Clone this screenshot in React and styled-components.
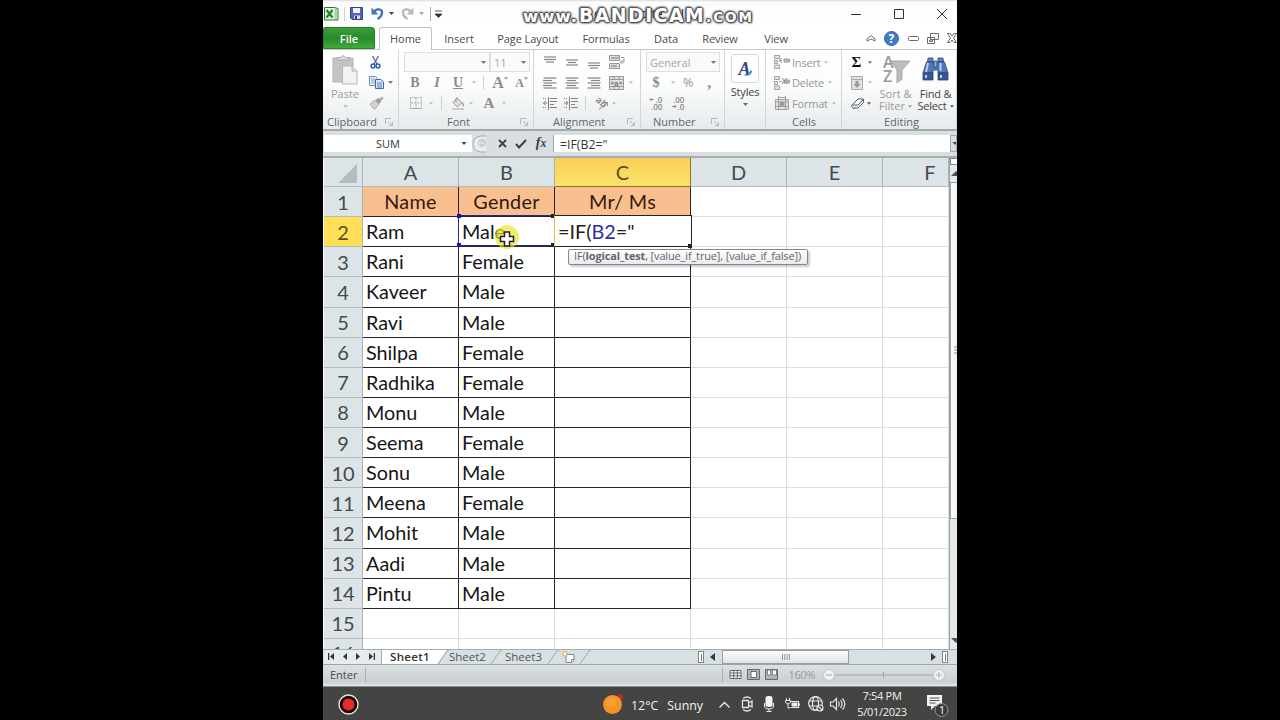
import React from "react";
import styled, { createGlobalStyle, css } from "styled-components";

const Global = createGlobalStyle`
  * { box-sizing: border-box; }
  html, body { margin: 0; background: #000; overflow: hidden; }
  body { font-family: "Open Sans", "Noto Sans", sans-serif; font-size: 11px; color: #444; }
  svg { display: block; flex: none; overflow: visible; }
`;

const Screen = styled.main`
  width: 1280px;
  height: 720px;
  background: #000;
  display: flex;
  justify-content: flex-start;
  padding-left: 323px;
`;
const Window = styled.section`
  width: 634px;
  height: 720px;
  display: flex;
  flex-direction: column;
  background: #fff;
  overflow: hidden;
  position: relative;
`;

/* ---------- title bar ---------- */
const TitleBar = styled.header`
  height: 27px;
  flex: none;
  display: flex;
  align-items: center;
  padding-left: 1px;
  background: linear-gradient(#d9dcdc 0, #fbfcfc 2px, #fff 100%);
  position: relative;
`;
const QuickAccess = styled.div`
  display: flex;
  align-items: center;
  width: 200px;
`;
const Title = styled.div`
  position: absolute;
  left: 271px;
  top: 5px;
  width: 90px;
  font-size: 12px;
  line-height: 18px;
  color: #111;
  display: flex;
  justify-content: space-between;
`;
const Watermark = styled.div`
  position: absolute;
  left: 200px;
  top: 6px;
  height: 20px;
  display: flex;
  align-items: baseline;
  font-family: "DejaVu Sans", sans-serif;
  font-weight: 700;
  color: #fff;
  white-space: nowrap;
  line-height: 20px;
  text-shadow: 1px 0 1px #555, -1px 0 1px #555, 0 1px 1px #555, 0 -1px 1px #555,
    1px 1px 2px #555, -1px -1px 2px #555, 0 0 3px #555, 0 0 3px #666;
`;
const MarkSide = styled.span`
  font-size: ${(p) => p.$size}px;
  width: ${(p) => p.$w}px;
  letter-spacing: ${(p) => p.$ls || 0}px;
`;
const WindowButtons = styled.div`
  margin-left: auto;
  display: flex;
  align-items: center;
  gap: 33px;
  padding-right: 10px;
`;

/* ---------- ribbon ---------- */
const TabRow = styled.nav`
  height: 23px;
  flex: none;
  display: flex;
  background: #fff;
  border-bottom: 1px solid #c3c8cd;
`;
const FileTab = styled.div`
  width: 52px;
  height: 22px;
  background: linear-gradient(#3d9c3c, #278a29 50%, #3eac3a);
  border: 1px solid #2a7f2c;
  border-radius: 2px 3px 0 0;
  color: #fff;
  font-weight: 600;
  text-align: center;
  line-height: 21px;
`;
const Tab = styled.div`
  width: ${(p) => p.$w}px;
  margin-left: ${(p) => p.$ml || 0}px;
  height: 23px;
  text-align: center;
  line-height: 23px;
  letter-spacing: ${(p) => p.$ls || 0}px;
  color: #4b4b4b;
  white-space: nowrap;
  ${(p) =>
    p.$active &&
    css`
      border: 1px solid #bcc2c8;
      border-bottom: 0;
      border-radius: 3px 3px 0 0;
      background: #fff;
      line-height: 21px;
    `}
`;
const TabTools = styled.div`
  margin-left: auto;
  display: flex;
  align-items: center;
  width: 91px;
  gap: 8.3px;
  flex: none;
`;
const Ribbon = styled.div`
  height: 81px;
  flex: none;
  display: flex;
  background: linear-gradient(#fff 0, #fbfcfc 45%, #e6eaec 100%);
  border-bottom: 2px solid #a2a8ab;
`;
const Group = styled.div`
  width: ${(p) => p.$w}px;
  flex: none;
  border-right: 1px solid #d2d6d9;
  display: flex;
  flex-direction: column;
  justify-content: space-between;
  padding-top: 2px;
`;
const GroupBody = styled.div`
  flex: 1;
  display: flex;
  min-height: 0;
`;
const GroupLabel = styled.div`
  height: 14px;
  display: flex;
  justify-content: space-between;
  align-items: center;
  padding: 0 5px 0 ${(p) => p.$pl}px;
  color: #5f656b;
  line-height: 14px;
`;
const ToolRows = styled.div`
  display: flex;
  flex-direction: column;
  padding-left: ${(p) => p.$pl || 0}px;
  color: #979797;
`;
const ToolRow = styled.div`
  height: 20.5px;
  display: flex;
  align-items: center;
  gap: ${(p) => p.$gap || 0}px;
  padding-left: ${(p) => p.$pl || 0}px;
  letter-spacing: ${(p) => p.$ls || 0}px;
  white-space: nowrap;
`;
const BigTool = styled.div`
  width: ${(p) => p.$w}px;
  padding-top: ${(p) => p.$pt || 3}px;
  display: flex;
  flex-direction: column;
  align-items: center;
  line-height: 12px;
  color: ${(p) => p.$c || "#9a9a9a"};
  text-align: center;
  white-space: nowrap;
`;
const BigLabel = styled.span`
  margin-top: ${(p) => p.$mt || 0}px;
  margin-bottom: ${(p) => p.$mb || 0}px;
  display: flex;
  align-items: center;
  gap: 3px;
  letter-spacing: ${(p) => p.$ls || 0}px;
`;
const Combo = styled.div`
  width: ${(p) => p.$w}px;
  height: 20px;
  border: 1px solid #dcdfe1;
  background: #fafafa;
  display: flex;
  align-items: center;
  justify-content: space-between;
  padding: 0 3px;
  color: #a6a6a6;
`;
const Letter = styled.span`
  font-family: "Liberation Serif", serif;
  font-weight: 700;
  font-size: ${(p) => p.$s || 14}px;
  color: ${(p) => p.$c || "#8b8b8b"};
  font-style: ${(p) => (p.$i ? "italic" : "normal")};
  text-decoration: ${(p) => (p.$u ? "underline" : "none")};
  width: ${(p) => p.$w || 12}px;
  text-align: center;
  line-height: 18px;
`;
const PercentSign = styled.span`
  font-size: 12.5px;
`;
const Raised = styled.span`
  padding-bottom: 9px;
`;
const Divider = styled.i`
  width: 1px;
  height: ${(p) => p.$h || 14}px;
  background: ${(p) => p.$c || "#d0d3d6"};
  flex: none;
`;
const Space = styled.i`
  width: ${(p) => p.$w}px;
  flex: none;
`;
const StylesTile = styled.div`
  width: 28px;
  height: 29px;
  border: 1px solid #d4d8dc;
  border-radius: 3px;
  background: #fff;
  display: grid;
  place-items: center;
`;

/* ---------- formula bar ---------- */
const FormulaBar = styled.div`
  height: 27px;
  flex: none;
  display: flex;
  align-items: stretch;
  padding: 4px 0 4px 1px;
  border-bottom: 2px solid #a9adaf;
  background: #d9dee0;
  color: #333;
`;
const NameBox = styled.div`
  width: 148px;
  background: #fff;
  display: flex;
  align-items: center;
  padding: 0 5px 0 52px;
  justify-content: space-between;
`;
const FormulaButtons = styled.div`
  width: 82px;
  display: flex;
  align-items: center;
  border-right: 1px solid #9ea5aa;
  gap: 8px;
`;
const FormulaInput = styled.div`
  flex: 1;
  background: #fff;
  padding-left: 6px;
  line-height: 20px;
  font-size: 12.3px;
`;
const Expand = styled.div`
  width: 7px;
  border: 1px solid #a3a9ad;
  overflow: hidden;
  display: flex;
  align-items: center;
  padding-left: 1px;
`;

/* ---------- grid ---------- */
const COLS = "39px 96px 96px 136px 96px 96px 1fr";
const Workspace = styled.div`
  flex: none;
  height: 491px;
  display: flex;
  position: relative;
`;
const Sheet = styled.div`
  width: 626px;
  height: 491px;
  overflow: hidden;
  padding-left: 1px;
`;
const Row = styled.div`
  display: grid;
  grid-template-columns: ${COLS};
  height: ${(p) => p.$h || 30.13}px;
`;
const Head = styled.div`
  font-family: Lato, sans-serif;
  font-size: 20px;
  color: ${(p) => (p.$on ? "#59501f" : "#444b4f")};
  background: ${(p) => (p.$on ? (p.$row ? "#ffdf57" : "linear-gradient(#f9d056, #fbe36a)") : "#dde4e7")};
  border-right: 1px solid ${(p) => (p.$on && !p.$row ? "#8d7428" : "#a9b2b7")};
  border-bottom: 1px solid ${(p) => (p.$on && !p.$row ? "#8d7428" : "#b3bbbf")};
  display: flex;
  align-items: center;
  justify-content: center;
  padding-left: ${(p) => p.$pl || 0}px;
`;
const Corner = styled(Head)`
  justify-content: flex-end;
  align-items: flex-end;
  padding: 0 4px 3px 0;
`;
const Cell = styled.div`
  font-family: Lato, sans-serif;
  font-size: 19.8px;
  letter-spacing: ${(p) => (p.$head ? 0.3 : 0)}px;
  color: #161616;
  padding: 0 0 1px 3px;
  display: flex;
  align-items: center;
  white-space: pre;
  border-right: 1px solid #d9dddc;
  border-bottom: 1px solid #dcdfdd;
  ${(p) => p.$table && css`border-color: #262626;`}
  ${(p) => p.$head && css`
    background: #fabf8f;
    color: #33190f;
    justify-content: center;
    padding-left: 0;
  `}
`;
const VScroll = styled.div`
  width: 8px;
  border-left: 1px solid #9ca4a8;
  background: #e5e9eb;
  display: flex;
  flex-direction: column;
  overflow: hidden;
`;
const SplitBox = styled.div`
  height: 7px;
  flex: none;
  width: 12px;
  margin-bottom: 5px;
  border: 1px solid #858c90;
  background: #fff;
`;
const VThumb = styled.div`
  height: 337px;
  flex: none;
  width: 16px;
  margin: 5px 0 auto;
  border: 1px solid #9aa2a7;
  background: linear-gradient(90deg, #fcfdfd, #dfe4e7);
  display: flex;
  align-items: center;
`;
const RangeMark = styled.div`
  position: absolute;
  left: 135px;
  top: 57px;
  width: 97px;
  height: 31px;
  border: 1px solid #25259a;
`;
const Handle = styled.i`
  position: absolute;
  width: 4px;
  height: 4px;
  background: ${(p) => p.$c || "#1616b8"};
  ${(p) => (p.$r ? "right: -1px;" : "left: -2px;")}
  ${(p) => (p.$b ? "bottom: -2px;" : "top: -2px;")}
`;
const CellEditor = styled.div`
  position: absolute;
  left: 231px;
  top: 57px;
  width: 138px;
  height: 32px;
  border: 1px solid #222;
  border-left: 1px solid #dfc948;
  background: #fff;
  font-family: Lato, sans-serif;
  font-size: 19.8px;
  line-height: 31px;
  padding-left: 3px;
  color: #222;
`;
const Ref = styled.span`
  color: #2d2da6;
`;
const Tip = styled.div`
  position: absolute;
  left: 245px;
  top: 91px;
  width: 240px;
  height: 16px;
  border: 1px solid #85888a;
  border-radius: 2px;
  background: linear-gradient(#fff, #e9eaee);
  box-shadow: 2px 2px 2px #0003;
  color: #62656c;
  font-size: 11px;
  line-height: 12px;
  padding-left: 5px;
  white-space: nowrap;
  letter-spacing: -0.15px;
`;
const Pointer = styled.div`
  position: absolute;
  left: 170px;
  top: 66px;
`;

/* ---------- bottom bars ---------- */
const SheetBar = styled.div`
  height: 16px;
  flex: none;
  display: flex;
  align-items: stretch;
  background: #d9e0e3;
  border-top: 1px solid #a5adb1;
  border-bottom: 1px solid #9ca4a8;
  padding-left: 1px;
`;
const NavArrows = styled.div`
  width: 58px;
  display: flex;
  align-items: center;
  gap: 7px;
  padding: 0 0 1px 4px;
  background: #e6ebed;
  border-right: 1px solid #a7afb3;
`;
const SheetTab = styled.div`
  width: ${(p) => p.$w}px;
  line-height: 14px;
  font-size: 11.5px;
  text-align: center;
  color: #4f565b;
  ${(p) => p.$active && css`background: #fff; color: #333; font-weight: 600; letter-spacing: 0.3px;`}
`;
const HScroll = styled.div`
  margin-left: auto;
  width: 262px;
  display: flex;
  align-items: center;
  padding-left: 3px;
`;
const HThumb = styled.div`
  width: 127px;
  height: 14px;
  border: 1px solid #979fa3;
  background: linear-gradient(#fdfefe, #dde3e6);
  display: grid;
  place-items: center;
`;
const Grip = styled.div`
  width: 6px;
  height: 12px;
  border: 1px solid #7e8589;
  background: #fff;
  display: grid;
  place-items: center;
`;
const StatusBar = styled.div`
  height: 21px;
  flex: none;
  display: flex;
  align-items: center;
  background: linear-gradient(#dbe1e3, #c9d0d3 80%, #e2e6e7);
  padding: 0 0 2px 7px;
  color: #454b4f;
`;
const StatusRight = styled.div`
  margin-left: auto;
  width: 235px;
  display: flex;
  align-items: center;
`;
const Percent = styled.span`
  width: 32px;
  text-align: center;
  color: #92989b;
  letter-spacing: -0.3px;
`;
const Taskbar = styled.footer`
  height: 34px;
  flex: none;
  display: flex;
  align-items: center;
  background: #444442;
  border-top: 1px solid #8a8d8d;
  color: #f2f2f2;
  padding: 1px 0 0 14px;
`;
const Weather = styled.div`
  display: flex;
  align-items: center;
  margin-left: 243px;
  padding-top: 2px;
  font-size: 12.4px;
  white-space: pre;
  width: 117px;
`;
const Tray = styled.div`
  display: flex;
  align-items: center;
`;
const Clock = styled.div`
  width: 60px;
  text-align: center;
  font-size: 11px;
  line-height: 16.5px;
  margin-left: 6px;
  letter-spacing: -0.3px;
  white-space: nowrap;
`;

/* ---------- drawings ---------- */
const Caret = ({ c = "#9a9a9a", s = 5 }) => (
  <svg width={s} height="3" viewBox="0 0 5 3"><path d="M0 0h5L2.5 3z" fill={c} /></svg>
);
const Launcher = () => (
  <svg width="8" height="8" viewBox="0 0 8 8" fill="none" stroke="#b3b8bc"><path d="M.5 6V.5H6M3 3l4 4M7.500 4v3.500H4" /></svg>
);
const Lines = ({ rows, w = 14, h = 12, c = "#858585" }) => (
  <svg width={w} height={h} viewBox={`0 0 ${w} ${h}`} stroke={c} strokeWidth="1.200">
    {rows.map(([x, y, l], i) => <path key={i} d={`M${x} ${y}h${l}`} />)}
  </svg>
);
const Logo = () => (
  <svg width="15" height="15" viewBox="0 0 15 15">
    <path d="M.5 1.500h10l3.500 1v11.500H.5z" fill="#e3f1df" stroke="#1f7a2e" />
    <path d="M10.500 3h3v10h-3z" fill="#a9d49c" />
    <path d="M2.500 4l6 7.500M8.500 4l-6 7.500" stroke="#24802d" strokeWidth="2.200" />
  </svg>
);
const Save = () => (
  <svg width="13" height="13" viewBox="0 0 13 13">
    <path d="M.5.5h12v12H2L.5 11z" fill="#5660b8" stroke="#3b428f" />
    <path d="M3 1h7v5H3z" fill="#f2f4fc" /><path d="M4 8.500h6V12H4z" fill="#d8dcf2" /><path d="M5 9h2v3H5z" fill="#353b80" />
  </svg>
);
const Undo = ({ c, flip }) => (
  <svg width="13" height="13" viewBox="0 0 13 13">
    <g transform={flip ? "translate(13 0) scale(-1 1)" : undefined}>
      <path d="M3 4.500C6 1.500 11 1.500 11 5.500 11 8.500 9 10.500 6.500 12" fill="none" stroke={c} strokeWidth="2.500" />
      <path d="M.5.5v7h7z" fill={c} />
    </g>
  </svg>
);
const Paste = () => (
  <svg width="26" height="30" viewBox="0 0 26 30">
    <path d="M1 3h20v24H1z" fill="#c4c4c4" stroke="#b2b2b2" />
    <path d="M5 5V2.500h3.500Q11-1 13.500 2.500H17V5z" fill="#dedede" stroke="#aaa" />
    <path d="M10.500 11H20l5 5v13H10.500z" fill="#f2f2f2" stroke="#b7b7b7" /><path d="M20 11v5h5" fill="#ddd" stroke="#b7b7b7" />
  </svg>
);
const Cut = () => (
  <svg width="11" height="13" viewBox="0 0 11 13" fill="none">
    <path d="M2.500 0l4.500 8M8.500 0L4 8" stroke="#5f7190" strokeWidth="1.400" />
    <circle cx="3" cy="10" r="1.900" stroke="#2f5fa8" strokeWidth="1.500" /><circle cx="8" cy="10" r="1.900" stroke="#2f5fa8" strokeWidth="1.500" />
  </svg>
);
const Copy = () => (
  <svg width="15" height="13" viewBox="0 0 15 13">
    <path d="M.5.5h6l2 2v7h-8z" fill="#eef4fc" stroke="#7288ad" /><path d="M2 3h4M2 5h4M2 7h4" stroke="#7f9cc9" />
    <path d="M6.500 3.500h5.500l2.500 2.500v6.500h-8z" fill="#d9e7fa" stroke="#426aab" /><path d="M8 7h5M8 9h5M8 11h5" stroke="#5a82c0" />
  </svg>
);
const Brush = () => (
  <svg width="15" height="13" viewBox="0 0 15 13">
    <path d="M1 7l5-4 4 4-4.500 5.500z" fill="#d2d2d2" stroke="#aaa" /><path d="M6.500 3l3-2 3 3-2.500 3z" fill="#9a9a9a" /><path d="M10.500 3L14 .5" stroke="#aaa" strokeWidth="2.500" />
  </svg>
);
const Borders = () => (
  <svg width="12" height="12" viewBox="0 0 12 12" fill="none" stroke="#aaa"><path d="M.5.5h11v11H.5zM6 1v10M1 6h10" strokeDasharray="2 1" /><path d="M0 11.500h12" /></svg>
);
const Bucket = () => (
  <svg width="14" height="13" viewBox="0 0 14 13" fill="none">
    <path d="M6 1l5 4.500L6.500 10 2 5.500z" fill="#ddd" stroke="#999" /><path d="M5 5V1.500Q6-.5 7 1.500" stroke="#999" /><path d="M11 5q3 2 1.500 4.500Q11 9 11 5" fill="#999" /><path d="M1 12h12" stroke="#ccc" strokeWidth="2" />
  </svg>
);
const Wrap = () => (
  <svg width="16" height="14" viewBox="0 0 16 14" fill="none" stroke="#999">
    <path d="M.5.5h10v5H.500zM.5 8.500h10v5H.5z" fill="#ddd" /><path d="M2 3h8M2 11h6" stroke="#777" /><path d="M12 2.500h3V7h-3M13.500 5L11.500 7l2 2" />
  </svg>
);
const Merge = () => (
  <svg width="15" height="14" viewBox="0 0 15 14" fill="none" stroke="#999">
    <path d="M.5.5h14v13H.5zM.5 3.500h14M.5 10.500h14M5 .5v3M10 .5v3M5 10.500v3M10 10.500v3" fill="#e2e2e2" /><path d="M1.500 7h3M10.500 7h3M3 5.500L4.500 7 3 8.500M12 5.500L10.500 7l1.500 1.500" stroke="#777" /><text x="5" y="9.500" fontSize="7.500" fontWeight="700" fontFamily="Open Sans" fill="#777" stroke="none">a</text>
  </svg>
);
const Indent = ({ out }) => (
  <svg width="15" height="13" viewBox="0 0 15 13" stroke="#808080" fill="none">
    <path d="M7 1.500h7M7 4.500h7M7 7.500h4M7 10.500h7M5.500 0v13" /><path d={out ? "M4.500 6H.5M2.500 4L.5 6l2 2" : "M0 6h4M2 4l2 2-2 2"} /><path d="M0 1.500h4M0 10.500h4" strokeDasharray="1 1" />
  </svg>
);
const Orient = () => (
  <svg width="15" height="14" viewBox="0 0 15 14" fill="none" stroke="#888">
    <text x="1" y="7" fontSize="9.500" fontWeight="600" fontFamily="Open Sans" fill="#808080" stroke="none" transform="rotate(42 4 6)">ab</text>
    <path d="M5 13.500l8-7M10 6.500h3.500v3.500" />
  </svg>
);
const Decimals = ({ more }) => (
  <svg width="15" height="14" viewBox="0 0 15 14">
    <path d={more ? "M5 3.500H1M2.500 2L1 3.500 2.500 5" : "M1 10.500h4M3.500 9L5 10.500 3.500 12"} fill="none" stroke="#8b8b8b" />
    <text x={more ? 6.5 : 2} y="6.500" fontSize="8" fontWeight="600" fill="#888" fontFamily="Open Sans">{more ? ".0" : ".00"}</text>
    <text x={more ? 2 : 6.5} y="13.500" fontSize="8" fontWeight="600" fill="#888" fontFamily="Open Sans">{more ? ".00" : ".0"}</text>
  </svg>
);
const StyleA = () => (
  <svg width="16" height="19" viewBox="0 0 16 19">
    <text x="1.500" y="15.500" fontSize="18" fontStyle="italic" fontWeight="700" fontFamily="Liberation Serif" fill="#2f4a80">A</text>
    <path d="M6 16q5 1 7.500-5l1.800 1.500Q13 18.500 6 16" fill="#4a8bd6" />
  </svg>
);
const CellsIcon = ({ kind }) => (
  <svg width="16" height="14" viewBox="0 0 16 14" fill="none" stroke="#a0a0a0">
    {kind === "format" ? (
      <><path d="M1.500 3.500h13v10h-13z" fill="#e2e2e2" /><path d="M4.500 0v13M11.500 0v13M4 1.500h8M2 6h12M2 10.500h12" /><path d="M6 6h4v4H6z" fill="#999" /></>
    ) : (
      <><path d="M.5.5h5v3h-5zM.5 5.500h3v3h-3zM.5 10h5v3.500h-5z" fill="#e6e6e6" /><path d="M5 5.500h3M10 4h5.500v3H10z" fill="#bbb" />{kind === "delete" ? <path d="M8 2l5 6M13 2L8 8" stroke="#888" /> : <path d="M8 3L5 5.500 8 8" />}</>
    )}
  </svg>
);
const Fill = () => (
  <svg width="12" height="14" viewBox="0 0 12 14"><path d="M.5.5h11v13H.5z" fill="#e2e2e2" stroke="#aaa" /><path d="M.5 3.500h11" stroke="#aaa" /><path d="M4.500 5h3v3h2L6 12 2.500 8h2z" fill="#999" /></svg>
);
const Eraser = () => (
  <svg width="14" height="11" viewBox="0 0 14 11"><path d="M1 7L7 1h5.500L7 7.500 4.500 10H2Q0 9 1 7z" fill="#fff" stroke="#4d5666" /><path d="M1 7h6l5.500-5.500v3L7 10H2" fill="#e6e9f0" stroke="#5d6676" /></svg>
);
const SortFilter = () => (
  <svg width="28" height="29" viewBox="0 0 28 29">
    <path d="M9 5h19l-8 9v9l-5 4V14z" fill="#bdbdbd" stroke="#a8a8a8" />
    <text x="1" y="12" fontSize="16" fontFamily="Open Sans" fontWeight="600" fill="#9a9a9a">A</text>
    <text x="1" y="26" fontSize="16" fontFamily="Open Sans" fontWeight="600" fill="#9a9a9a">Z</text>
  </svg>
);
const Binoculars = () => (
  <svg width="27" height="24" viewBox="0 0 27 24" stroke="#284372" strokeWidth=".8">
    <path d="M6 1h5v4H5.500zM16 1h5l.5 4H16z" fill="#5d85c0" />
    <path d="M4.500 5h7l.5 3h3l.5-3h7l3.500 11H16v-3h-5v3H1z" fill="#4f78b6" />
    <path d="M1 16h10v7H1zM16 16h10v7H16z" fill="#355892" /><path d="M6 6L4 15M18.500 6v8M4 18v3M19 18v3" stroke="#b9d0ee" strokeWidth="2" />
    <path d="M12 4h3v6h-3z" fill="#8fb0dc" />
  </svg>
);
const PageView = ({ k }) => (
  <svg width="13" height="11" viewBox="0 0 13 11" fill="none" stroke="#646b70">
    {k === 0 && <path d="M1 1.500h11v8H1zM1 4h11M1 6.800h11M4.700 1.500v8M8.400 1.500v8" fill="#f4f6f6" />}
    {k === 1 && <><path d="M.5.5h12v10H.5z" fill="#aeb4b7" /><path d="M4 2.500h5.500v6H4z" fill="#fff" /></>}
    {k === 2 && <><path d="M.5.5h12v10H.5z" fill="#aeb4b7" /><path d="M2.500 1h3v5h-3zM7.500 1h4v5h-4z" fill="#fff" stroke="#7b8286" /></>}
  </svg>
);
const ZoomKnob = ({ plus }) => (
  <svg width="12" height="12" viewBox="0 0 12 12"><circle cx="6" cy="6" r="5.500" fill="#eef0f1" stroke="#c2c7ca" /><path d={plus ? "M3 6h6M6 3v6" : "M3 6h6"} stroke="#b0b5b8" strokeWidth="1.200" /></svg>
);
const SlantEnd = () => (
  <svg width="11" height="14" viewBox="0 0 11 14"><path d="M0 14L9 1Q10 0 11 0" fill="none" stroke="#a3abaf" /></svg>
);
const WhiteSlant = () => (
  <svg width="11" height="14" viewBox="0 0 11 14"><path d="M-1 0h12Q10 0 9 1L0 14h-1z" fill="#fff" /><path d="M0 14L9 1Q10 0 11 0" fill="none" stroke="#8f989d" /></svg>
);

const names = [
  ["Ram", "Male"], ["Rani", "Female"], ["Kaveer", "Male"], ["Ravi", "Male"], ["Shilpa", "Female"],
  ["Radhika", "Female"], ["Monu", "Male"], ["Seema", "Female"], ["Sonu", "Male"], ["Meena", "Female"],
  ["Mohit", "Male"], ["Aadi", "Male"], ["Pintu", "Male"], ["", ""], ["", ""],
];

function RibbonGroups() {
  return (
    <Ribbon>
      <Group $w={76}>
        <GroupBody>
          <BigTool $w={44}><Paste /><BigLabel $mt={3} $mb={5}>Paste</BigLabel><Caret c="#c2c2c2" /></BigTool>
          <ToolRows $pl={2}>
            <ToolRow $pl={1}><Cut /></ToolRow>
            <ToolRow $gap={4}><Copy /><Caret c="#777" /></ToolRow>
            <ToolRow><Brush /></ToolRow>
          </ToolRows>
        </GroupBody>
        <GroupLabel $pl={4}>Clipboard<Launcher /></GroupLabel>
      </Group>
      <Group $w={135}>
        <GroupBody>
          <ToolRows $pl={5}>
            <ToolRow><Combo $w={86}><span /><Caret c="#777" /></Combo><Combo $w={40}>11<Caret c="#777" /></Combo></ToolRow>
            <ToolRow $pl={5}>
              <Letter>B</Letter><Space $w={10} /><Letter $i>I</Letter><Space $w={9} /><Letter $u>U</Letter><Space $w={8} /><Caret c="#bbb" s={4} />
              <Space $w={7} /><Divider /><Space $w={8} /><Letter $s={16}>A</Letter><Raised><Caret s={4} /></Raised><Space $w={7} /><Letter $s={12} $w={9}>A</Letter><Raised><Caret s={4} /></Raised>
            </ToolRow>
            <ToolRow $pl={6}>
              <Borders /><Space $w={7} /><Caret c="#bbb" s={4} /><Space $w={8} /><Divider /><Space $w={9} /><Bucket /><Space $w={4} /><Caret c="#bbb" s={4} />
              <Space $w={10} /><Letter $s={15}>A</Letter><Space $w={7} /><Caret c="#bbb" s={4} />
            </ToolRow>
          </ToolRows>
        </GroupBody>
        <GroupLabel $pl={48}>Font<Launcher /></GroupLabel>
      </Group>
      <Group $w={107}>
        <GroupBody>
          <ToolRows $pl={9}>
            <ToolRow>
              <Lines rows={[[1, 1, 12], [1, 3.5, 12], [3, 6, 8]]} /><Space $w={8} /><Lines rows={[[1, 4, 12], [3, 6.5, 8], [1, 9, 12]]} /><Space $w={8} />
              <Lines rows={[[1, 7, 12], [1, 9.5, 12], [3, 12, 8]]} /><Space $w={8} /><Wrap />
            </ToolRow>
            <ToolRow>
              {[0, 1, 2].map((k) => (
                <React.Fragment key={k}><Lines rows={[0, 1, 2, 3, 4].map((i) => [i % 2 ? [0, 2, 4][k] : 0.5, 1 + i * 2.5, i % 2 ? 9 : 13])} /><Space $w={8} /></React.Fragment>
              ))}
              <Merge /><Space $w={5} /><Caret c="#bbb" s={4} />
            </ToolRow>
            <ToolRow>
              <Indent out /><Space $w={6} /><Indent /><Space $w={6} /><Divider /><Space $w={8} /><Orient /><Space $w={3} /><Caret c="#bbb" s={4} />
            </ToolRow>
          </ToolRows>
        </GroupBody>
        <GroupLabel $pl={19}>Alignment<Launcher /></GroupLabel>
      </Group>
      <Group $w={84}>
        <GroupBody>
          <ToolRows $pl={5}>
            <ToolRow><Combo $w={74}>General<Caret c="#777" /></Combo></ToolRow>
            <ToolRow $pl={6}>
              <Letter $w={8}>$</Letter><Space $w={11} /><Caret c="#bbb" s={4} /><Space $w={8} /><PercentSign>%</PercentSign><Space $w={13} /><Letter $w={6} $s={16}>,</Letter>
            </ToolRow>
            <ToolRow $pl={3} $gap={7}><Decimals more /><Decimals /></ToolRow>
          </ToolRows>
        </GroupBody>
        <GroupLabel $pl={12}>Number<Launcher /></GroupLabel>
      </Group>
      <Group $w={41}>
        <GroupBody>
          <BigTool $w={42} $pt={2} $c="#444"><StylesTile><StyleA /></StylesTile><BigLabel $mt={3} $mb={5} $ls={-0.2}>Styles</BigLabel><Caret c="#666" /></BigTool>
        </GroupBody>
      </Group>
      <Group $w={76}>
        <GroupBody>
          <ToolRows $pl={8}>
            {[["Insert", "insert"], ["Delete", "delete"], ["Format", "format"]].map(([t, k]) => (
              <ToolRow key={k} $gap={2} $ls={-0.2}><CellsIcon kind={k} />{t}<Space $w={0} /><Caret c="#bbb" s={4} /></ToolRow>
            ))}
          </ToolRows>
        </GroupBody>
        <GroupLabel $pl={26}>Cells</GroupLabel>
      </Group>
      <Group $w={115}>
        <GroupBody>
          <ToolRows $pl={9}>
            <ToolRow $gap={6}><Letter $s={15} $c="#111" $w={11}>Σ</Letter><Caret c="#666" s={4} /></ToolRow>
            <ToolRow $gap={5}><Fill /><Caret c="#bbb" s={4} /></ToolRow>
            <ToolRow $gap={2}><Eraser /><Caret c="#555" s={4} /></ToolRow>
          </ToolRows>
          <BigTool $w={47} $pt={4}><SortFilter /><BigLabel $mt={3}>Sort &amp;</BigLabel><BigLabel>Filter<Caret s={4} /></BigLabel></BigTool>
          <BigTool $w={33} $pt={5} $c="#444"><Binoculars /><BigLabel $mt={7} $ls={-0.2}>Find &amp;</BigLabel><BigLabel $ls={-0.2}>Select<Caret c="#555" s={4} /></BigLabel></BigTool>
        </GroupBody>
        <GroupLabel $pl={42}>Editing</GroupLabel>
      </Group>
    </Ribbon>
  );
}

export default function App() {
  return (
    <Screen>
      <Global />
      <Window>
        <TitleBar>
          <QuickAccess>
            <Logo /><Space $w={5} /><Divider /><Space $w={5} /><Save /><Space $w={8} /><Undo c="#4976b8" /><Space $w={5} /><Caret c="#444" />
            <Space $w={7} /><Undo c="#b8bcc0" flip /><Space $w={5} /><Caret c="#aaa" /><Space $w={6} /><Divider $c="#aaa" /><Space $w={4} />
            <svg width="7" height="8" viewBox="0 0 7 8"><path d="M0 1h7M0 4h7L3.500 7.500z" stroke="#333" fill="#333" strokeWidth=".8" /></svg>
          </QuickAccess>
          <Title><span>e</span><span>l</span><span>ofte</span><span>I</span></Title>
          <Watermark>
            <MarkSide $size={16.5} $w={56} $ls={1}>www.</MarkSide><MarkSide $size={18.8} $w={127} $ls={1.5}>BANDICAM</MarkSide><MarkSide $size={13.5} $w={48} $ls={2}>.COM</MarkSide>
          </Watermark>
          <WindowButtons>
            <svg width="10" height="10" viewBox="0 0 10 10" stroke="#333"><path d="M0 5.500h10" /></svg>
            <svg width="10" height="10" viewBox="0 0 10 10" fill="none" stroke="#333"><path d="M.5.5h9v9h-9z" /></svg>
            <svg width="10" height="10" viewBox="0 0 10 10" stroke="#333"><path d="M0 0l10 10M10 0L0 10" /></svg>
          </WindowButtons>
        </TitleBar>
        <TabRow>
          <FileTab>File</FileTab>
          <Tab $active $w={53} $ml={4}>Home</Tab>
          <Tab $w={48} $ml={3}>Insert</Tab>
          <Tab $w={74} $ml={8} $ls={-0.1}>Page Layout</Tab>
          <Tab $w={60} $ml={11} $ls={-0.1}>Formulas</Tab>
          <Tab $w={40} $ml={10}>Data</Tab>
          <Tab $w={50} $ml={9} $ls={-0.1}>Review</Tab>
          <Tab $w={40} $ml={11} $ls={-0.1}>View</Tab>
          <TabTools>
            <svg width="10" height="8" viewBox="0 0 10 8" fill="#fff" stroke="#656b70"><path d="M1 5l4-3.500L9 5v2L5 5 1 7z" /></svg>
            <svg width="15" height="15" viewBox="0 0 15 15"><circle cx="7.500" cy="7.500" r="7" fill="#3f7cc4" stroke="#3568a8" /><text x="4.500" y="12" fontSize="12" fontWeight="700" fontFamily="Open Sans" fill="#fff">?</text></svg>
            <svg width="11" height="5" viewBox="0 0 11 5"><rect x=".5" y=".5" width="10" height="4" rx="1" fill="#fff" stroke="#666c70" /></svg>
            <svg width="12" height="11" viewBox="0 0 12 11" fill="#fff" stroke="#666c70"><path d="M3.500.5h8v6h-8zM.500 4.500h7v6h-7zM2.500 7h3v1.500h-3z" /></svg>
            <svg width="10" height="10" viewBox="0 0 10 10" fill="#fff" stroke="#666c70"><path d="M.5.5H3L5 3 7 .5h2.500L6.500 5l3 4.500H7L5 7 3 9.500H.5l3-4.500z" /></svg>
          </TabTools>
        </TabRow>
        <RibbonGroups />
        <FormulaBar>
          <NameBox><span>SUM</span><Caret c="#444" s={6} /></NameBox>
          <FormulaButtons>
            <svg width="18" height="18" viewBox="0 0 18 18" fill="none"><path d="M14 1H9A8 8 0 0 0 9 17h5" fill="#e8ecee" stroke="#a4abaf" /><circle cx="10" cy="8" r="4" fill="#c8cfd2" /><path d="M7 8h5" stroke="#f5f5f5" /></svg>
            <svg width="9" height="9" viewBox="0 0 9 9" stroke="#3b4044" strokeWidth="1.800"><path d="M1 1l7 7M8 1L1 8" /></svg>
            <svg width="12" height="10" viewBox="0 0 12 10" fill="none" stroke="#3b4044" strokeWidth="2"><path d="M1 5l3 3.500L11 1" /></svg>
            <Letter $i $s={14} $c="#3b4044" $w={12}>f<small>x</small></Letter>
          </FormulaButtons>
          <FormulaInput>=IF(B2="</FormulaInput>
          <Expand><Caret c="#444" s={6} /></Expand>
        </FormulaBar>
        <Workspace>
          <Sheet>
            <Row $h={29}>
              <Corner><svg width="20" height="19" viewBox="0 0 20 19"><path d="M19 0v19H0z" fill="#b4bcc0" /></svg></Corner>
              {["A", "B", "C", "D", "E", "F"].map((c) => <Head key={c} $on={c === "C"} $pl={c === "F" ? 29 : 0}>{c}</Head>)}
            </Row>
            <Row>
              <Head>1</Head><Cell $head $table>Name</Cell><Cell $head $table>Gender</Cell><Cell $head $table>Mr/ Ms</Cell><Cell /><Cell /><Cell />
            </Row>
            {names.map(([n, g], i) => (
              <Row key={i}>
                <Head $row $on={i === 0}>{i + 2}</Head>
                <Cell $table={i < 13}>{n}</Cell><Cell $table={i < 13}>{g}</Cell><Cell $table={i < 13} /><Cell /><Cell /><Cell />
              </Row>
            ))}
          </Sheet>
          <VScroll>
            <SplitBox />
            <svg width="12" height="7" viewBox="0 0 12 7"><path d="M1 6l5-5 5 5z" fill="#4e5559" /></svg>
            <VThumb><Lines w={8} h={9} c="#9aa2a6" rows={[[3, 1, 8], [3, 4, 8], [3, 7, 8]]} /></VThumb>
            <svg width="12" height="13" viewBox="0 0 12 13"><path d="M1 2h10L6 7z" fill="#4e5559" /></svg>
          </VScroll>
          <RangeMark><Handle /><Handle $b /><Handle $r $c="#222" /><Handle $r $b $c="#222" /></RangeMark>
          <CellEditor>=IF(<Ref>B2</Ref>="<Handle $r $b $c="#222" /></CellEditor>
          <Tip>IF(<b>logical_test</b>, [value_if_true], [value_if_false])</Tip>
          <Pointer>
            <svg width="28" height="28" viewBox="0 0 28 28">
              <circle cx="14" cy="13" r="12" fill="#e8e426" opacity=".66" />
              <path d="M11.500 8h5v4.500h4v5h-4v4.500h-5v-4.500h-4v-5h4z" fill="#fff" stroke="#222" strokeWidth="1.500" />
            </svg>
          </Pointer>
        </Workspace>
        <SheetBar>
          <NavArrows>
            <svg width="7" height="7" viewBox="0 0 7 7" fill="#30363a"><path d="M0 0h1.300v7H0zM6 0v7L2 3.500z" /></svg>
            <svg width="6" height="7" viewBox="0 0 6 7" fill="#30363a"><path d="M5 0v7L1 3.500z" /></svg>
            <svg width="6" height="7" viewBox="0 0 6 7" fill="#30363a"><path d="M1 0v7l4-3.500z" /></svg>
            <svg width="7" height="7" viewBox="0 0 7 7" fill="#30363a"><path d="M5.700 0H7v7H5.700zM1 0v7l4-3.500z" /></svg>
          </NavArrows>
          <SheetTab $active $w={56}>Sheet1</SheetTab><WhiteSlant />
          <SheetTab $w={36}>Sheet2</SheetTab><Space $w={6} /><SlantEnd />
          <Space $w={2} /><SheetTab $w={39}>Sheet3</SheetTab><Space $w={5} /><SlantEnd /><Space $w={2} />
          <svg width="15" height="14" viewBox="0 0 15 14"><path d="M5 4.500h8v6l-2 2H5z" fill="#fff" stroke="#7885b4" /><path d="M10.500 12v-2.500H13" stroke="#7885b4" fill="none" /><path d="M4 .5v7M.5 4h7M1.500 1.500l5 5M6.500 1.500l-5 5" stroke="#e9a83c" /><circle cx="4" cy="4" r="1.400" fill="#fff" /></svg>
          <Space $w={4} /><SlantEnd />
          <HScroll>
            <Grip><Divider $h={7} $c="#777" /></Grip><Space $w={6} />
            <svg width="5" height="8" viewBox="0 0 5 8"><path d="M5 0v8L0 4z" fill="#333a3e" /></svg><Space $w={7} />
            <HThumb><svg width="8" height="6" viewBox="0 0 8 6"><path d="M.5 0v6M2.800 0v6M5.100 0v6M7.400 0v6" stroke="#90989c" /></svg></HThumb><Space $w={82} />
            <svg width="5" height="8" viewBox="0 0 5 8"><path d="M0 0v8l5-4z" fill="#333a3e" /></svg><Space $w={6} />
            <Grip><Divider $h={7} $c="#777" /></Grip>
          </HScroll>
        </SheetBar>
        <StatusBar>
          Enter<Space $w={8} /><Divider $h={15} $c="#aab1b5" />
          <StatusRight>
            <Divider $h={15} $c="#aab1b5" /><Space $w={6} /><PageView k={0} /><Space $w={5} /><PageView k={1} /><Space $w={5} /><PageView k={2} /><Space $w={8} />
            <Percent>160%</Percent><Space $w={5} /><ZoomKnob /><svg width="98" height="8" viewBox="0 0 98 8" stroke="#9da4a8"><path d="M0 4h98M48.500 1v6" /></svg><ZoomKnob plus />
          </StatusRight>
        </StatusBar>
        <Taskbar>
          <svg width="22" height="22" viewBox="0 0 22 22"><circle cx="11.500" cy="11.500" r="9.500" fill="#190606" stroke="#e6e6e6" strokeWidth="1.400" /><circle cx="11.500" cy="11.500" r="6" fill="#e52d2d" /></svg>
          <Weather>
            <svg width="22" height="22" viewBox="0 0 22 22"><circle cx="18" cy="3" r="3" fill="#b93028" /><circle cx="10.500" cy="10.500" r="9.500" fill="#f49326" /><circle cx="9" cy="8" r="5" fill="#f9a835" opacity=".6" /></svg>
            <Space $w={7} />12°C<Space $w={9} />Sunny
          </Weather>
          <Tray>
            <svg width="11" height="7" viewBox="0 0 11 7" fill="none" stroke="#eee" strokeWidth="1.300"><path d="M.5 6.500l5-5 5 5" /></svg><Space $w={11} />
            <svg width="12" height="16" viewBox="0 0 12 16" fill="none" stroke="#e5e5e5" strokeWidth="1.300"><path d="M1.500 4.500h6v7h-6zM7.500 7l3.500-2v6L7.500 9M2 2.500q4-3 8 0M2 13.500q4 3 8 0" /></svg><Space $w={10} />
            <svg width="12" height="16" viewBox="0 0 12 16" fill="none" stroke="#f2f2f2"><rect x="3" y=".5" width="6" height="10" rx="1.500" fill="#f4f4f4" /><path d="M1.500 7v3q0 3 4.500 3t4.500-3V7M6 13v3M3.500 15.500h5" /></svg><Space $w={10} />
            <svg width="16" height="12" viewBox="0 0 16 12" fill="none" stroke="#e9e9e9"><path d="M5.500 3.500h8v6h-8M14.500 5.500v2" strokeWidth="1.200" /><path d="M7 5h5v3H7z" fill="#eee" /><path d="M1.500 0v2M4.500 0v2M.5 2.500h5v2L3 6 .5 4.500zM3 6v4h2" /></svg><Space $w={7} />
            <svg width="16" height="16" viewBox="0 0 16 16" fill="none" stroke="#e9e9e9" strokeWidth="1.200"><circle cx="7.500" cy="7.500" r="6.800" /><ellipse cx="7.500" cy="7.500" rx="3" ry="6.800" /><path d="M1 5h13M1 10h8" /><circle cx="12" cy="12" r="3" fill="#444" /><path d="M10 10l4 4" /></svg><Space $w={6} />
            <svg width="16" height="14" viewBox="0 0 16 14" fill="none" stroke="#e5e5e5" strokeWidth="1.200"><path d="M.5 5h2.500L6.500 1.500v11L3 9H.5zM8.500 4.500q1.500 2.500 0 5M10.500 3q3 4 0 8M12.500 1.500q4.500 5.500 0 11" /></svg>
            <Clock>7:54 PM<br />5/01/2023</Clock><Space $w={14} />
            <svg width="24" height="24" viewBox="0 0 24 24"><path d="M1 3h15v11H9l-4 4v-4H1z" fill="#f2f2f2" /><path d="M3.500 6h10M3.500 8.500h10M3.500 11h6" stroke="#555" /><circle cx="15.500" cy="18" r="6.500" fill="#3a3b3a" stroke="#969696" /><text x="13" y="22" fontSize="10.500" fontFamily="Open Sans" fill="#fff">1</text></svg>
          </Tray>
        </Taskbar>
      </Window>
    </Screen>
  );
}
